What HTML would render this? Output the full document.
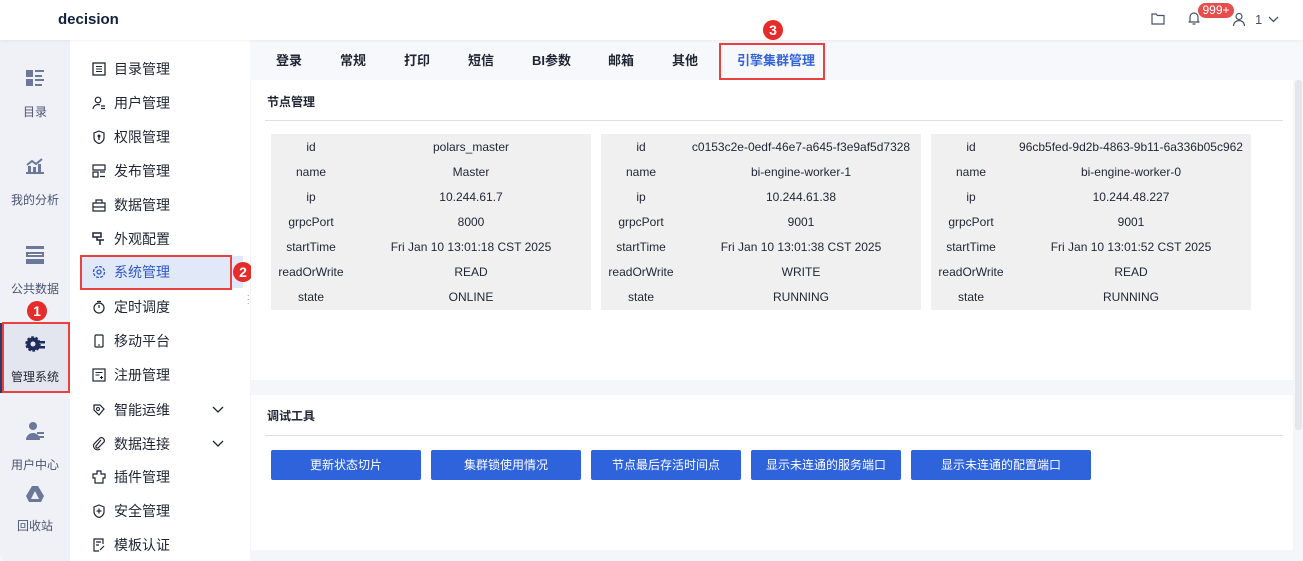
<!DOCTYPE html>
<html><head><meta charset="utf-8"><style>
*{margin:0;padding:0;box-sizing:border-box}
body{width:1303px;height:561px;overflow:hidden;background:#f5f6fa;font-family:"Liberation Sans","Noto Sans CJK SC",sans-serif;position:relative;color:#1f2533}
.a{position:absolute}
.hdr{left:0;top:0;width:1303px;height:40px;background:#fff;box-shadow:0 1px 3px rgba(0,0,0,.06);z-index:2}
.rail{left:0;top:40px;width:70px;height:521px;background:#eff1f7;border-bottom-left-radius:8px}
.ri{position:absolute;left:0;width:70px;text-align:center;font-size:12px;color:#4b5570}
.menu{left:70px;top:40px;width:180px;height:521px;background:#fff}
.mi{position:absolute;left:22px;font-size:14px;color:#1f2533;height:20px;line-height:20px}
.mi svg{position:absolute;left:0;top:3px}
.mi span{position:absolute;left:22px;white-space:nowrap}
.tabs{left:250px;top:40px;width:1053px;height:40px;background:#f7f8fc}
.tab{position:absolute;top:10px;font-size:13px;font-weight:bold;color:#1f2533}
.p1{left:251px;top:80px;width:1042px;height:300px;background:#fff}
.p2{left:251px;top:395px;width:1042px;height:155px;background:#fff}
.tb{position:absolute;top:134px;width:320px;height:176px;background:#f0f0f0;font-size:12px;color:#1f2533}
.row{position:absolute;left:0;width:320px;height:25px;line-height:25px}
.row .k{position:absolute;left:0;width:80px;text-align:center}
.row .v{position:absolute;left:80px;width:240px;text-align:center;white-space:nowrap}
.btn{position:absolute;top:450px;height:30px;background:#2e63db;color:#fff;font-size:12px;text-align:center;line-height:30px;border-radius:2px}
.red{border:2px solid #e8413f;position:absolute}
.num{position:absolute;width:20px;height:20px;border-radius:50%;background:#e62b2b;color:#fff;font-size:14px;text-align:center;line-height:20px;font-weight:bold}
</style></head><body>
<div class="a hdr">
 <div class="a" style="left:58px;top:11px;font-size:15px;font-weight:bold;color:#14213d">decision</div>
 <svg class="a" style="left:1151px;top:12px" width="14" height="13" viewBox="0 0 14 13"><path d="M1 2h4l1.5 1.5H13V12H1z" fill="none" stroke="#4a5168" stroke-width="1.2"/></svg>
 <svg class="a" style="left:1187px;top:11px" width="14" height="15" viewBox="0 0 14 15"><path d="M3 11V6a4 4 0 018 0v5zM1.5 11h11M5.5 13h3" fill="none" stroke="#4a5168" stroke-width="1.2"/></svg>
 <div class="a" style="left:1198px;top:3px;width:36px;height:15px;border-radius:8px;background:#e64d4d;color:#fff;font-size:12px;line-height:15px;text-align:center">999+</div>
 <svg class="a" style="left:1232px;top:12px" width="14" height="15" viewBox="0 0 14 15"><circle cx="7" cy="4.5" r="3" fill="none" stroke="#4a5168" stroke-width="1.2"/><path d="M1.5 14a5.5 5.5 0 0111 0" fill="none" stroke="#4a5168" stroke-width="1.2"/></svg>
 <div class="a" style="left:1255px;top:12px;font-size:13px;color:#4a5168">1</div>
 <svg class="a" style="left:1268px;top:16px" width="11" height="7" viewBox="0 0 11 7"><path d="M1 1l4.5 4.5L10 1" fill="none" stroke="#4a5168" stroke-width="1.3"/></svg>
</div>
<div class="a rail">
 <svg class="a" style="left:26px;top:30px" width="18" height="16" viewBox="0 0 18 16"><rect x="0" y="0" width="7" height="7" fill="#6b7899"/><rect x="0" y="9" width="7" height="7" fill="#6b7899"/><rect x="9" y="0" width="9" height="2" fill="#6b7899"/><rect x="9" y="5" width="7" height="2" fill="#6b7899"/><rect x="9" y="9" width="9" height="2" fill="#6b7899"/><rect x="9" y="14" width="7" height="2" fill="#6b7899"/></svg>
 <div class="ri" style="top:63px">目录</div>
 <svg class="a" style="left:26px;top:118px" width="18" height="16" viewBox="0 0 18 16"><path d="M1 7l5-4 4 3 6-5" fill="none" stroke="#6b7899" stroke-width="2"/><rect x="0" y="14" width="18" height="2" fill="#6b7899"/><rect x="2" y="8" width="3" height="6" fill="#6b7899"/><rect x="7" y="9" width="3" height="5" fill="#6b7899"/><rect x="12" y="6" width="3" height="8" fill="#6b7899"/></svg>
 <div class="ri" style="top:151px">我的分析</div>
 <svg class="a" style="left:26px;top:206px" width="18" height="18" viewBox="0 0 18 18"><rect x="0" y="0" width="18" height="3" fill="#6b7899"/><rect x="0" y="6" width="18" height="5" fill="#6b7899"/><rect x="0" y="13" width="18" height="5" fill="#6b7899"/><rect x="2" y="8" width="14" height="1" fill="#fff"/></svg>
 <div class="ri" style="top:240px">公共数据</div>
 <div class="a" style="left:0;top:283px;width:3px;height:70px;background:#2b3a6b"></div>
 <div class="a" style="left:3px;top:283px;width:66px;height:70px;background:#e3e6ee"></div>
 <svg class="a" style="left:25px;top:295px" width="20" height="18" viewBox="0 0 20 18"><circle cx="8" cy="9" r="6.5" fill="#1f2d5c" stroke="#1f2d5c" stroke-width="2.5" stroke-dasharray="2.5 1.6"/><circle cx="8" cy="9" r="2.5" fill="#e3e6ee"/><rect x="11" y="6" width="9" height="2.5" fill="#1f2d5c"/><rect x="11" y="11" width="9" height="2.5" fill="#1f2d5c"/></svg>
 <div class="ri" style="top:328px;color:#1f2533">管理系统</div>
 <svg class="a" style="left:26px;top:382px" width="18" height="18" viewBox="0 0 18 18"><circle cx="7" cy="4" r="4" fill="#6b7899"/><path d="M0 18a7 7 0 0114 0z" fill="#6b7899"/><rect x="11" y="10" width="7" height="2" fill="#6b7899"/><rect x="11" y="14" width="7" height="2" fill="#6b7899"/></svg>
 <div class="ri" style="top:416px">用户中心</div>
 <svg class="a" style="left:25px;top:445px" width="20" height="18" viewBox="0 0 20 18"><path d="M7 1h6l6 10-3 6H4L1 11z" fill="#6b7899"/><path d="M10 6l-4 8h8z" fill="#eff1f7"/></svg>
 <div class="ri" style="top:477px">回收站</div>
</div>
<div class="red" style="left:2px;top:322px;width:68px;height:71px"></div>
<div class="num" style="left:27px;top:301px">1</div>
<div class="a menu">
 <div class="mi" style="top:19px"><svg width="14" height="14"><rect x="1" y="1" width="12" height="12" fill="none" stroke="#1f2533" stroke-width="1.3"/><path d="M4 4.5h6M4 7h6M4 9.5h6" stroke="#1f2533"/></svg><span>目录管理</span></div>
 <div class="mi" style="top:53px"><svg width="14" height="14"><circle cx="6" cy="4" r="2.8" fill="none" stroke="#1f2533" stroke-width="1.2"/><path d="M1 13a5 5 0 017-4M9 10h4M9 12.5h4" fill="none" stroke="#1f2533" stroke-width="1.2"/></svg><span>用户管理</span></div>
 <div class="mi" style="top:87px"><svg width="14" height="14"><path d="M7 1l5 2v5c0 3-3 5-5 5.5C5 13 2 11 2 8V3z" fill="none" stroke="#1f2533" stroke-width="1.2"/><circle cx="7" cy="6" r="1.5" fill="#1f2533"/><path d="M7 7v3" stroke="#1f2533" stroke-width="1.3"/></svg><span>权限管理</span></div>
 <div class="mi" style="top:121px"><svg width="14" height="14"><path d="M1 1h12v5H1zM1 8h5v5H1zM8 8h5M8 12.5h5" fill="none" stroke="#1f2533" stroke-width="1.2"/></svg><span>发布管理</span></div>
 <div class="mi" style="top:155px"><svg width="14" height="14"><path d="M1 5h12v8H1zM4 5V2h6v3M1 9h12" fill="none" stroke="#1f2533" stroke-width="1.2"/></svg><span>数据管理</span></div>
 <div class="mi" style="top:189px"><svg width="14" height="14"><path d="M1 1h8v4H1zM5 5v3h7M8 8v5" fill="none" stroke="#1f2533" stroke-width="1.5"/></svg><span>外观配置</span></div>
 <div class="a" style="left:11px;top:216px;width:162px;height:32px;background:#e1e8f8"></div>
 <div class="mi" style="top:222px;color:#3058c8"><svg width="14" height="14"><circle cx="7" cy="7" r="5.5" fill="none" stroke="#3058c8" stroke-width="1.3" stroke-dasharray="3 1.3"/><circle cx="7" cy="7" r="2" fill="none" stroke="#3058c8" stroke-width="1.3"/></svg><span>系统管理</span></div>
 <div class="mi" style="top:257px"><svg width="14" height="14"><circle cx="7" cy="8" r="5" fill="none" stroke="#1f2533" stroke-width="1.2"/><path d="M5 1.5h4M7 5v3" stroke="#1f2533" stroke-width="1.2"/></svg><span>定时调度</span></div>
 <div class="mi" style="top:291px"><svg width="14" height="14"><rect x="3" y="1" width="8" height="12" rx="1" fill="none" stroke="#1f2533" stroke-width="1.2"/><path d="M6 11h2" stroke="#1f2533"/></svg><span>移动平台</span></div>
 <div class="mi" style="top:325px"><svg width="14" height="14"><rect x="1" y="1" width="12" height="12" fill="none" stroke="#1f2533" stroke-width="1.2"/><path d="M3.5 4.5h7M3.5 7h4M8 9.5h3M9.5 8v3" stroke="#1f2533"/></svg><span>注册管理</span></div>
 <div class="mi" style="top:360px"><svg width="14" height="14"><path d="M2 2h6l4 4-5 6-5-5z" fill="none" stroke="#1f2533" stroke-width="1.2"/><circle cx="6" cy="6" r="1.5" fill="none" stroke="#1f2533"/></svg><span>智能运维</span></div>
 <svg class="a" style="left:142px;top:366px" width="12" height="7"><path d="M1 1l5 5 5-5" fill="none" stroke="#1f2533" stroke-width="1.3"/></svg>
 <div class="mi" style="top:394px"><svg width="14" height="14"><path d="M9 3L4 9a1.5 1.5 0 002 2l6-6a3 3 0 00-4-4L2 7a4 4 0 006 5" fill="none" stroke="#1f2533" stroke-width="1.2"/></svg><span>数据连接</span></div>
 <svg class="a" style="left:142px;top:400px" width="12" height="7"><path d="M1 1l5 5 5-5" fill="none" stroke="#1f2533" stroke-width="1.3"/></svg>
 <div class="mi" style="top:427px"><svg width="14" height="14"><path d="M5 1h4v3h4v4h-2v5H3V8H1V4h4z" fill="none" stroke="#1f2533" stroke-width="1.2"/></svg><span>插件管理</span></div>
 <div class="mi" style="top:461px"><svg width="14" height="14"><path d="M7 1l5 2v5c0 3-3 5-5 5.5C5 13 2 11 2 8V3z" fill="none" stroke="#1f2533" stroke-width="1.2"/><path d="M4.5 7h5M7 4.5v5" stroke="#1f2533" stroke-width="1.2"/></svg><span>安全管理</span></div>
 <div class="mi" style="top:495px"><svg width="14" height="14"><path d="M11 6V1H2v12h5M4 4h5M4 7h3M8 12l4-4" fill="none" stroke="#1f2533" stroke-width="1.2"/></svg><span>模板认证</span></div>
</div>
<div class="red" style="left:80px;top:255px;width:152px;height:35px"></div>
<div class="num" style="left:233px;top:262px">2</div>
<div class="a" style="left:247px;top:295px;width:6px;height:14px;font-size:9px;color:#8892a8;line-height:4px;letter-spacing:1px">::<br>::</div>
<div class="a tabs">
 <div class="tab" style="left:26px">登录</div>
 <div class="tab" style="left:90px">常规</div>
 <div class="tab" style="left:154px">打印</div>
 <div class="tab" style="left:218px">短信</div>
 <div class="tab" style="left:282px">BI参数</div>
 <div class="tab" style="left:358px">邮箱</div>
 <div class="tab" style="left:422px">其他</div>
 <div class="tab" style="left:487px;color:#3363d9">引擎集群管理</div>
</div>
<div class="red" style="left:719px;top:43px;width:106px;height:37px"></div>
<div class="num" style="left:763px;top:20px;z-index:3">3</div>
<div class="a p1"></div>
<div class="a p2"></div>
<div class="a" style="left:1295px;top:80px;width:7px;height:350px;background:#e6e7ec;border-radius:3px"></div>
<div class="a" style="left:267px;top:93px;font-size:12px;font-weight:bold">节点管理</div>
<div class="a" style="left:265px;top:120px;width:1018px;height:1px;background:#dcdfe6"></div>
<div class="tb" style="left:271px">
 <div class="row" style="top:1px"><span class="k">id</span><span class="v">polars_master</span></div>
 <div class="row" style="top:26px"><span class="k">name</span><span class="v">Master</span></div>
 <div class="row" style="top:51px"><span class="k">ip</span><span class="v">10.244.61.7</span></div>
 <div class="row" style="top:76px"><span class="k">grpcPort</span><span class="v">8000</span></div>
 <div class="row" style="top:101px"><span class="k">startTime</span><span class="v">Fri Jan 10 13:01:18 CST 2025</span></div>
 <div class="row" style="top:126px"><span class="k">readOrWrite</span><span class="v">READ</span></div>
 <div class="row" style="top:151px"><span class="k">state</span><span class="v">ONLINE</span></div>
</div>
<div class="tb" style="left:601px">
 <div class="row" style="top:1px"><span class="k">id</span><span class="v">c0153c2e-0edf-46e7-a645-f3e9af5d7328</span></div>
 <div class="row" style="top:26px"><span class="k">name</span><span class="v">bi-engine-worker-1</span></div>
 <div class="row" style="top:51px"><span class="k">ip</span><span class="v">10.244.61.38</span></div>
 <div class="row" style="top:76px"><span class="k">grpcPort</span><span class="v">9001</span></div>
 <div class="row" style="top:101px"><span class="k">startTime</span><span class="v">Fri Jan 10 13:01:38 CST 2025</span></div>
 <div class="row" style="top:126px"><span class="k">readOrWrite</span><span class="v">WRITE</span></div>
 <div class="row" style="top:151px"><span class="k">state</span><span class="v">RUNNING</span></div>
</div>
<div class="tb" style="left:931px">
 <div class="row" style="top:1px"><span class="k">id</span><span class="v">96cb5fed-9d2b-4863-9b11-6a336b05c962</span></div>
 <div class="row" style="top:26px"><span class="k">name</span><span class="v">bi-engine-worker-0</span></div>
 <div class="row" style="top:51px"><span class="k">ip</span><span class="v">10.244.48.227</span></div>
 <div class="row" style="top:76px"><span class="k">grpcPort</span><span class="v">9001</span></div>
 <div class="row" style="top:101px"><span class="k">startTime</span><span class="v">Fri Jan 10 13:01:52 CST 2025</span></div>
 <div class="row" style="top:126px"><span class="k">readOrWrite</span><span class="v">READ</span></div>
 <div class="row" style="top:151px"><span class="k">state</span><span class="v">RUNNING</span></div>
</div>
<div class="a" style="left:267px;top:407px;font-size:12px;font-weight:bold">调试工具</div>
<div class="a" style="left:265px;top:435px;width:1018px;height:1px;background:#dcdfe6"></div>
<div class="btn" style="left:271px;width:150px">更新状态切片</div>
<div class="btn" style="left:431px;width:150px">集群锁使用情况</div>
<div class="btn" style="left:591px;width:150px">节点最后存活时间点</div>
<div class="btn" style="left:751px;width:150px">显示未连通的服务端口</div>
<div class="btn" style="left:911px;width:180px">显示未连通的配置端口</div>
</body></html>
